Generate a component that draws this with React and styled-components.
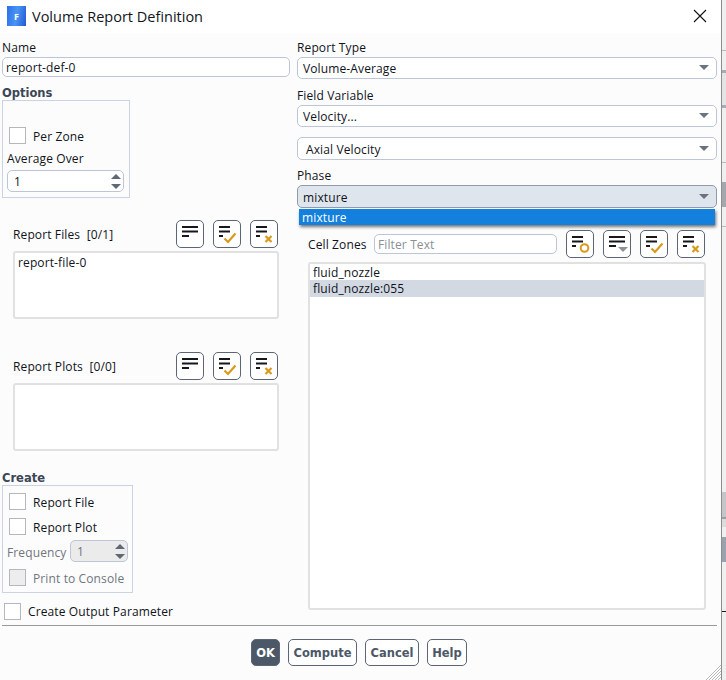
import React from "react"
import styled, { createGlobalStyle } from "styled-components"

const Global = createGlobalStyle`
  html, body { margin: 0; padding: 0; background: #fff; }
  * { box-sizing: border-box; }
`

const Page = styled.div`
  width: 726px;
  height: 680px;
  display: flex;
  overflow: hidden;
  font-family: "Open Sans", "Noto Sans", sans-serif;
  font-size: 12px;
  letter-spacing: 0.12px;
  color: #10141a;
`

const Dialog = styled.div`
  position: relative;
  width: 721px;
  height: 680px;
  flex: none;
  display: flex;
  flex-direction: column;
  background: #fcfcfc;
`

// the window behind the dialog, only a thin strip of it shows
const Backdrop = styled.div`
  flex: 1;
  border-left: 1px solid #8d8d8d;
  background: linear-gradient(
    180deg,
    #efefef 0 50px,
    #b5b9be 50px 51px,
    #efefef 51px 70px,
    #a9adb3 70px 73px,
    #e4e4e4 73px 105px,
    #a9adb3 105px 108px,
    #efefef 108px 162px,
    #b5b9be 162px 163px,
    #efefef 163px 182px,
    #a4a8ae 182px 207px,
    #efefef 207px 226px,
    #b5b9be 226px 227px,
    #efefef 227px 492px,
    #c3c5c8 492px 517px,
    #9b9da0 517px 519px,
    #dcdcdc 519px 527px,
    #efefef 527px 537px,
    #9aa3ad 537px 562px,
    #efefef 562px 611px,
    #1b1b1b 611px 612px,
    #efefef 612px
  );
`

const TitleBar = styled.div`
  height: 33px;
  padding: 6px 14px 0 7px;
  display: flex;
  align-items: flex-start;
  background: #fff;
`

const TitleText = styled.div`
  margin: 1px 0 0 6px;
  font-size: 14.5px;
  letter-spacing: 0;
  line-height: 20px;
`

const Logo = styled.div`
  width: 19px;
  height: 20px;
  display: flex;
  align-items: center;
  justify-content: center;
  background: linear-gradient(100deg, #2b6fe6, #4a95f5 50%, #2459d2);
  color: #fff;
  font-size: 9px;
  font-weight: 700;
`

const CloseIcon = styled.svg`
  width: 14px;
  height: 14px;
  margin: 3px 0 0 auto;
`

const Columns = styled.div`
  height: 592px;
  display: flex;
  padding-left: 2px;
`

const LeftColumn = styled.div`
  width: 288px;
  display: flex;
  flex-direction: column;
`

const RightColumn = styled.div`
  width: 420px;
  margin-left: 7px;
  display: flex;
  flex-direction: column;
`

const Label = styled.div`
  height: 16px;
  line-height: ${({ $low }) => ($low ? 18 : 16)}px;
  margin-top: ${({ $top }) => $top || 0}px;
  margin-bottom: ${({ $bottom }) => $bottom ?? 1}px;
`

const GroupTitle = styled.div`
  height: 15px;
  line-height: 17px;
  margin-top: ${({ $top }) => $top || 0}px;
  font-family: "DejaVu Sans", sans-serif;
  font-weight: 700;
  font-size: 11.5px;
  letter-spacing: 0;
  color: #3b4656;
`

const TextField = styled.div`
  height: 20px;
  width: ${({ $width }) => ($width ? `${$width}px` : "100%")};
  padding-left: 3px;
  line-height: 19px;
  background: #fff;
  border: 1px solid #bcc6d6;
  border-radius: 5px;
  color: ${({ $placeholder }) => ($placeholder ? "#8a8f96" : "inherit")};
`

const Combo = styled.div`
  position: relative;
  height: ${({ $height }) => $height || 22}px;
  margin-top: ${({ $top }) => $top || 0}px;
  padding: 1px 0 0 ${({ $indent }) => $indent || 5}px;
  display: flex;
  align-items: center;
  border: 1px solid ${({ $open }) => ($open ? "#8f9bad" : "#bcc6d6")};
  border-radius: 5px;
  background: ${({ $open }) => ($open ? "#dfe5ed" : "#fff")};
  &::after {
    content: "";
    position: absolute;
    right: 7px;
    top: 50%;
    margin-top: -3px;
    border-left: 5px solid transparent;
    border-right: 5px solid transparent;
    border-top: 5px solid #6b7280;
  }
`

const Popup = styled.div`
  position: absolute;
  top: 209px;
  left: 299px;
  width: 416px;
  height: 16px;
  padding-left: 3px;
  line-height: 18px;
  background: #1380dd;
  color: #fff;
  box-shadow: 1px 2px 3px rgba(0, 0, 0, 0.55);
`

const Group = styled.div`
  width: ${({ $width }) => $width}px;
  height: ${({ $height }) => $height}px;
  padding: ${({ $pad }) => $pad || 0}px 0 0 4px;
  border: 1px solid #c9d3e3;
  display: flex;
  flex-direction: column;
`

const CheckRow = styled.div`
  height: 16px;
  margin-top: ${({ $top }) => $top || 0}px;
  margin-left: ${({ $left }) => $left || 0}px;
  display: flex;
  align-items: center;
  gap: 7px;
  color: ${({ $muted }) => ($muted ? "#70767e" : "inherit")};
`

const RowText = styled.span`
  padding-top: 2px;
`

const Box = styled.div`
  width: 17px;
  height: 17px;
  flex: none;
  border: 1px solid #b4b8bd;
  background: ${({ $disabled }) => ($disabled ? "#ededed" : "#fff")};
`

const Spin = styled.div`
  position: relative;
  width: ${({ $width }) => $width}px;
  height: 22px;
  padding-left: 6px;
  line-height: 21px;
  border: 1px solid #bcc6d6;
  border-radius: 5px;
  background: ${({ $disabled }) => ($disabled ? "#ebebeb" : "#fff")};
  color: ${({ $disabled }) => ($disabled ? "#70767e" : "inherit")};
`

const SpinArrows = styled.svg`
  position: absolute;
  right: 1px;
  top: 2px;
  width: 12px;
  height: 17px;
`

const FreqRow = styled.div`
  width: 121px;
  margin-top: 6px;
  display: flex;
  align-items: center;
  justify-content: space-between;
  color: #70767e;
`

const ListHead = styled.div`
  margin: ${({ $top }) => $top || 0}px 0 3px 11px;
  width: 265px;
  height: 28px;
  display: flex;
  align-items: center;
  gap: 9px;
`

const ListTitle = styled.div`
  flex: 1;
  white-space: pre;
`

const IconBtn = styled.div`
  width: 28px;
  height: 28px;
  flex: none;
  border: 1px solid #5a6675;
  border-radius: 5px;
  background: #fff;
`

const ListBox = styled.div`
  width: ${({ $width }) => $width}px;
  height: ${({ $height }) => $height}px;
  margin-left: ${({ $left }) => $left || 0}px;
  border: 2px solid #e1e1e1;
  border-radius: 3px;
  background: #fff;
  padding-top: ${({ $pad }) => $pad || 0}px;
`

const ListRow = styled.div`
  height: 17px;
  line-height: 18px;
  padding-left: 3px;
  background: ${({ $selected }) => ($selected ? "#d3d9e2" : "transparent")};
  &:first-child {
    height: 16px;
    line-height: 18px;
  }
`

const ZoneBar = styled.div`
  margin: 22px 0 4px 11px;
  width: 397px;
  height: 28px;
  display: flex;
  align-items: center;
  gap: 9px;
`

const ZoneFilter = styled.div`
  flex: 1;
  display: flex;
  align-items: center;
`

const Divider = styled.div`
  height: 1px;
  margin: 0 4px 0 2px;
  background: #9a9a9a;
`

const Footer = styled.div`
  margin-top: 13px;
  display: flex;
  justify-content: center;
  gap: 8px;
  padding-right: 3px;
`

const Button = styled.div`
  height: 27px;
  width: ${({ $width }) => $width}px;
  padding-top: 1px;
  display: flex;
  align-items: center;
  justify-content: center;
  border: 1px solid #5a6675;
  border-radius: 5px;
  font-family: "DejaVu Sans", sans-serif;
  font-weight: 700;
  font-size: 11.5px;
  letter-spacing: 0;
  background: ${({ $primary }) => ($primary ? "#4c5868" : "#fff")};
  color: ${({ $primary }) => ($primary ? "#fff" : "#4c5868")};
`

const Grip = styled.svg`
  position: absolute;
  right: 0;
  bottom: 0;
  width: 16px;
  height: 16px;
`

const Bars = ({ long }) => (
  <g fill="#15181c">
    <rect x="5" y="5" width={long ? 16 : 11} height="2" />
    <rect x="5" y="9.5" width={long ? 16 : 11} height="2" />
    <rect x="5" y="14" width={long ? 7 : 4} height="2" />
  </g>
)

const ToolButton = ({ kind }) => (
  <IconBtn>
    <svg width="26" height="26" viewBox="0 0 26 26">
      <Bars long={kind === "all" || kind === "menu"} />
      {kind === "check" && (
        <path d="M10.5 17.5l3.5 3.5 7.5-8.5" fill="none" stroke="#d99a1c" strokeWidth="2.2" />
      )}
      {kind === "cross" && (
        <path d="M14.5 15l6 6M20.5 15l-6 6" fill="none" stroke="#d99a1c" strokeWidth="2.2" />
      )}
      {kind === "circle" && (
        <circle cx="17.5" cy="17" r="3.8" fill="none" stroke="#d99a1c" strokeWidth="2" />
      )}
      {kind === "menu" && <path d="M14 16h10l-5 5z" fill="#8b929c" />}
    </svg>
  </IconBtn>
)

const Arrows = () => (
  <SpinArrows viewBox="0 0 12 17">
    <path d="M1 6l5-5 5 5z" fill="#5f6875" />
    <path d="M1 11h10l-5 5z" fill="#5f6875" />
  </SpinArrows>
)

const ReportList = ({ title, top, rows = [] }) => (
  <>
    <ListHead $top={top}>
      <ListTitle>{title}</ListTitle>
      <ToolButton kind="all" />
      <ToolButton kind="check" />
      <ToolButton kind="cross" />
    </ListHead>
    <ListBox $width={266} $height={68} $left={11} $pad={1}>
      {rows.map((r) => (
        <ListRow key={r}>{r}</ListRow>
      ))}
    </ListBox>
  </>
)

export default function App() {
  return (
    <Page>
      <Global />
      <Dialog>
        <TitleBar>
          <Logo>F</Logo>
          <TitleText>Volume Report Definition</TitleText>
          <CloseIcon viewBox="0 0 14 14">
            <path d="M1 1l12 12M13 1L1 13" stroke="#111" strokeWidth="1.1" fill="none" />
          </CloseIcon>
        </TitleBar>
        <Columns>
          <LeftColumn>
            <Label $top={7}>Name</Label>
            <TextField>report-def-0</TextField>
            <GroupTitle $top={8}>Options</GroupTitle>
            <Group $width={128} $height={98} $pad={26}>
              <CheckRow $left={2}>
                <Box />
                <RowText>Per Zone</RowText>
              </CheckRow>
              <Label $top={7} $bottom={4} $low>
                Average Over
              </Label>
              <Spin $width={117}>
                1
                <Arrows />
              </Spin>
            </Group>
            <ReportList title="Report Files  [0/1]" top={22} rows={["report-file-0"]} />
            <ReportList title="Report Plots  [0/0]" top={33} />
            <GroupTitle $top={19}>Create</GroupTitle>
            <Group $width={131} $height={108} $pad={7}>
              <CheckRow $left={2}>
                <Box />
                <RowText>Report File</RowText>
              </CheckRow>
              <CheckRow $left={2} $top={9}>
                <Box />
                <RowText>Report Plot</RowText>
              </CheckRow>
              <FreqRow>
                <RowText>Frequency</RowText>
                <Spin $width={58} $disabled>
                  1
                  <Arrows />
                </Spin>
              </FreqRow>
              <CheckRow $left={2} $top={7} $muted>
                <Box $disabled />
                <RowText>Print to Console</RowText>
              </CheckRow>
            </Group>
            <CheckRow $left={2} $top={10}>
              <Box />
              Create Output Parameter
            </CheckRow>
          </LeftColumn>
          <RightColumn>
            <Label $top={7}>Report Type</Label>
            <Combo>Volume-Average</Combo>
            <Label $top={9}>Field Variable</Label>
            <Combo>Velocity...</Combo>
            <Combo $top={10} $height={23} $indent={8}>
              Axial Velocity
            </Combo>
            <Label $top={8}>Phase</Label>
            <Combo $open $height={23}>
              mixture
            </Combo>
            <ZoneBar>
              <ZoneFilter>
                <ListTitle>Cell Zones</ListTitle>
                <TextField $width={183} $placeholder>
                  Filter Text
                </TextField>
              </ZoneFilter>
              <ToolButton kind="circle" />
              <ToolButton kind="menu" />
              <ToolButton kind="check" />
              <ToolButton kind="cross" />
            </ZoneBar>
            <ListBox $width={398} $height={348} $left={11}>
              <ListRow>fluid_nozzle</ListRow>
              <ListRow $selected>fluid_nozzle:055</ListRow>
            </ListBox>
          </RightColumn>
        </Columns>
        <Divider />
        <Footer>
          <Button $primary $width={29}>
            OK
          </Button>
          <Button $width={69}>Compute</Button>
          <Button $width={54}>Cancel</Button>
          <Button $width={40}>Help</Button>
        </Footer>
        <Popup>mixture</Popup>
        <Grip viewBox="0 0 16 16">
          <path
            d="M16 1L1 16M16 4L4 16M16 7L7 16M16 10l-6 6M16 13l-3 3"
            stroke="#a8a8a8"
            strokeWidth="0.8"
          />
        </Grip>
      </Dialog>
      <Backdrop />
    </Page>
  )
}
